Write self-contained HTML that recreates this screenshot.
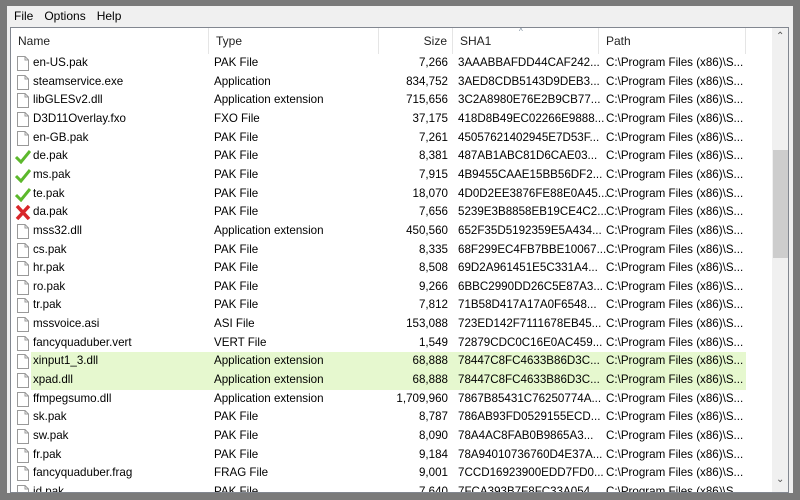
<!DOCTYPE html>
<html><head><style>
*{margin:0;padding:0;box-sizing:border-box}
body{width:800px;height:500px;background:#f0f0f0;position:relative;overflow:hidden;font-family:"Liberation Sans",sans-serif;font-size:12px;color:#000}
.frame{position:absolute;left:0;top:0;width:800px;height:500px;border:7px solid #7a7a7a;border-top-width:6px;border-bottom-width:0}
.menu{position:absolute;top:8px;left:14px;height:17px;line-height:17px}
.menu span{margin-right:11px}
.lv{position:absolute;left:10px;top:27px;width:779px;height:466px;border:1px solid #828790;background:#fff;overflow:hidden}
.hdr{position:absolute;left:0;top:0;height:26px;width:760px;line-height:26px;color:#222}
.hdr div{position:absolute;top:0;height:26px;border-right:1px solid #e5e5e5;padding-left:7px}
.row{position:absolute;left:0;height:18.65px;line-height:18.65px;width:760px;font-size:11.6px}
.row div{position:absolute;top:0;white-space:nowrap}
.hl{position:absolute;left:20px;width:715px;height:18.65px;background:#e6f8cf}
.ico{position:absolute;left:6px;top:2px;width:12px;height:15px}
.sb{position:absolute;left:761px;top:0;width:17px;height:464px;background:#f0f0f0}
.thumb{position:absolute;left:1px;top:122px;width:15px;height:108px;background:#cdcdcd}
.bot{position:absolute;left:0;top:493px;width:800px;height:7px;background:#7a7a7a}
</style></head><body>
<div class="frame"></div>
<div class="menu"><span>File</span><span>Options</span><span>Help</span></div>
<div class="lv">
<div class="hdr">
<div style="left:0;width:198px">Name</div>
<div style="left:198px;width:170px">Type</div>
<div style="left:368px;width:74px;text-align:right;padding-right:5px">Size</div>
<div style="left:442px;width:146px">SHA1<span style="position:absolute;left:66px;top:-9px;font-size:8px;color:#789">^</span></div>
<div style="left:588px;width:147px">Path</div>
</div>
<div id="rows"></div>
<div class="sb"><div style="position:absolute;left:4px;top:3px;font-size:10px;color:#555">&#8963;</div><div class="thumb"></div><div style="position:absolute;left:4px;top:446px;font-size:10px;color:#555">&#8964;</div></div>
</div>
<div class="bot"></div>
<script>
var d=[["en-US.pak","PAK File","7,266","3AAABBAFDD44CAF242..."],["steamservice.exe","Application","834,752","3AED8CDB5143D9DEB3..."],["libGLESv2.dll","Application extension","715,656","3C2A8980E76E2B9CB77..."],["D3D11Overlay.fxo","FXO File","37,175","418D8B49EC02266E9888..."],["en-GB.pak","PAK File","7,261","45057621402945E7D53F..."],["de.pak","PAK File","8,381","487AB1ABC81D6CAE03...","ok"],["ms.pak","PAK File","7,915","4B9455CAAE15BB56DF2...","ok"],["te.pak","PAK File","18,070","4D0D2EE3876FE88E0A45...","ok"],["da.pak","PAK File","7,656","5239E3B8858EB19CE4C2...","x"],["mss32.dll","Application extension","450,560","652F35D5192359E5A434..."],["cs.pak","PAK File","8,335","68F299EC4FB7BBE10067..."],["hr.pak","PAK File","8,508","69D2A961451E5C331A4..."],["ro.pak","PAK File","9,266","6BBC2990DD26C5E87A3..."],["tr.pak","PAK File","7,812","71B58D417A17A0F6548..."],["mssvoice.asi","ASI File","153,088","723ED142F7111678EB45..."],["fancyquaduber.vert","VERT File","1,549","72879CDC0C16E0AC459..."],["xinput1_3.dll","Application extension","68,888","78447C8FC4633B86D3C...","","h"],["xpad.dll","Application extension","68,888","78447C8FC4633B86D3C...","","h"],["ffmpegsumo.dll","Application extension","1,709,960","7867B85431C76250774A..."],["sk.pak","PAK File","8,787","786AB93FD0529155ECD..."],["sw.pak","PAK File","8,090","78A4AC8FAB0B9865A3..."],["fr.pak","PAK File","9,184","78A94010736760D4E37A..."],["fancyquaduber.frag","FRAG File","9,001","7CCD16923900EDD7FD0..."],["id.pak","PAK File","7,640","7FCA393B7F8FC33A054..."]];
var h="",file='<svg class="ico" viewBox="0 0 12 15"><path d="M0.5 0.5H8L11.5 4V14.5H0.5Z" fill="#fff" stroke="#999"/><path d="M8 0.5V4H11.5" fill="none" stroke="#999"/></svg>',ok='<svg class="ico" style="left:4px;width:16px" viewBox="0 0 16 15"><path d="M1 8L6 13L15 2" fill="none" stroke="#5cb82c" stroke-width="3"/></svg>',x='<svg class="ico" style="left:4px;width:16px" viewBox="0 0 16 15"><path d="M2 1L14 14M14 1L2 14" stroke="#d8262a" stroke-width="3.5"/></svg>';
d.forEach(function(r,i){var t=26+i*18.65;h+='<div class="row" style="top:'+t+'px">'+(r[5]?'<div class="hl" style="left:20px"></div>':'')+(r[4]=="ok"?ok:r[4]=="x"?x:file)+'<div style="left:22px">'+r[0]+'</div><div style="left:203px">'+r[1]+'</div><div style="left:368px;width:69px;text-align:right">'+r[2]+'</div><div style="left:447px">'+r[3]+'</div><div style="left:595px">C:\\Program Files (x86)\\S...</div></div>'});
document.getElementById("rows").innerHTML=h;
</script>
</body></html>
